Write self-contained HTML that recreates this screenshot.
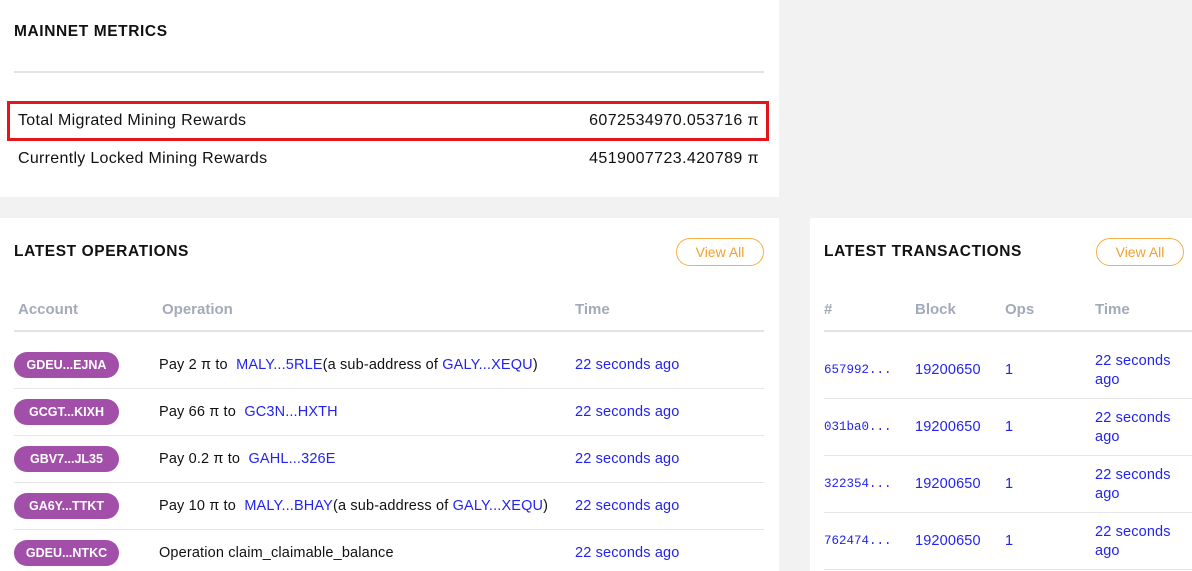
<!DOCTYPE html><html><head><style>
body{margin:0;width:1192px;height:571px;background:#f2f2f2;font-family:"Liberation Sans",sans-serif;position:relative;overflow:hidden;color:#111}
.card{position:absolute;background:#fff}
.a{position:absolute;white-space:nowrap}
h2{position:absolute;margin:0;font-size:15.5px;font-weight:bold;letter-spacing:.6px;color:#111}
.hd{position:absolute;color:#a3aab8;font-size:15px;font-weight:bold}
.ln{position:absolute;height:1px;background:#e6e6e6}
.hl{position:absolute;height:2px;background:#e3e3e3}
.b{position:absolute;left:14px;width:105px;height:26px;border-radius:13px;background:#a14fa8;color:#fff;font-size:12.5px;font-weight:bold;text-align:center;line-height:26px}
.l{color:#2323f0}
.btn{position:absolute;width:86px;height:26px;border:1px solid #f5b04a;border-radius:14px;color:#f0a030;font-size:14px;text-align:center;line-height:26px}
.t{font-size:14.5px;letter-spacing:.15px}
.m{font-family:"Liberation Mono",monospace;font-size:12.5px;color:#2323f0}
.big{font-size:16px}
</style></head><body>
<div class="card" style="left:0;top:0;width:779px;height:197px">
<h2 style="left:14px;top:23px">MAINNET METRICS</h2>
<div class="ln" style="left:14px;top:71px;width:750px;height:2px;background:#e3e3e3"></div>
<div style="position:absolute;left:7px;top:101px;width:756px;height:34px;border:3px solid #e4151b"></div>
<div class="a big" style="left:18px;top:112px;letter-spacing:.3px">Total Migrated Mining Rewards</div>
<div class="a big" style="right:20px;top:112px;letter-spacing:.4px">6072534970.053716 π</div>
<div class="a big" style="left:18px;top:150px;letter-spacing:.3px">Currently Locked Mining Rewards</div>
<div class="a big" style="right:20px;top:150px;letter-spacing:.4px">4519007723.420789 π</div>
</div>
<div class="card" style="left:0;top:218px;width:779px;height:353px">
<h2 style="left:14px;top:25px">LATEST OPERATIONS</h2>
<div class="btn" style="left:676px;top:20px">View All</div>
<div class="hd" style="left:18px;top:83px">Account</div>
<div class="hd" style="left:162px;top:83px">Operation</div>
<div class="hd" style="left:575px;top:83px">Time</div>
<div class="hl" style="left:14px;top:112px;width:750px"></div>
</div>
<div class="b" style="top:352px">GDEU...EJNA</div>
<div class="a t" style="left:159px;top:357px">Pay 2 π to &nbsp;<span class="l">MALY...5RLE</span>(a sub-address of <span class="l">GALY...XEQU</span>)</div>
<div class="a t l" style="left:575px;top:357px">22 seconds ago</div>
<div class="ln" style="left:14px;top:388px;width:750px"></div>
<div class="b" style="top:399px">GCGT...KIXH</div>
<div class="a t" style="left:159px;top:404px">Pay 66 π to &nbsp;<span class="l">GC3N...HXTH</span></div>
<div class="a t l" style="left:575px;top:404px">22 seconds ago</div>
<div class="ln" style="left:14px;top:435px;width:750px"></div>
<div class="b" style="top:446px">GBV7...JL35</div>
<div class="a t" style="left:159px;top:451px">Pay 0.2 π to &nbsp;<span class="l">GAHL...326E</span></div>
<div class="a t l" style="left:575px;top:451px">22 seconds ago</div>
<div class="ln" style="left:14px;top:482px;width:750px"></div>
<div class="b" style="top:493px">GA6Y...TTKT</div>
<div class="a t" style="left:159px;top:498px">Pay 10 π to &nbsp;<span class="l">MALY...BHAY</span>(a sub-address of <span class="l">GALY...XEQU</span>)</div>
<div class="a t l" style="left:575px;top:498px">22 seconds ago</div>
<div class="ln" style="left:14px;top:529px;width:750px"></div>
<div class="b" style="top:540px">GDEU...NTKC</div>
<div class="a t" style="left:159px;top:545px">Operation claim_claimable_balance</div>
<div class="a t l" style="left:575px;top:545px">22 seconds ago</div>

<div class="card" style="left:810px;top:218px;width:382px;height:353px">
<h2 style="left:14px;top:25px">LATEST TRANSACTIONS</h2>
<div class="btn" style="left:286px;top:20px">View All</div>
<div class="hd" style="left:14px;top:83px">#</div>
<div class="hd" style="left:105px;top:83px">Block</div>
<div class="hd" style="left:195px;top:83px">Ops</div>
<div class="hd" style="left:285px;top:83px">Time</div>
<div class="hl" style="left:14px;top:112px;width:368px"></div>
</div>
<div class="a m" style="left:824px;top:363px">657992...</div><div class="a t l" style="left:915px;top:362px">19200650</div><div class="a t l" style="left:1005px;top:362px">1</div><div class="a t l" style="left:1095px;top:352px;line-height:19px">22 seconds<br>ago</div>
<div class="ln" style="left:824px;top:398px;width:368px"></div>
<div class="a m" style="left:824px;top:420px">031ba0...</div><div class="a t l" style="left:915px;top:419px">19200650</div><div class="a t l" style="left:1005px;top:419px">1</div><div class="a t l" style="left:1095px;top:409px;line-height:19px">22 seconds<br>ago</div>
<div class="ln" style="left:824px;top:455px;width:368px"></div>
<div class="a m" style="left:824px;top:477px">322354...</div><div class="a t l" style="left:915px;top:476px">19200650</div><div class="a t l" style="left:1005px;top:476px">1</div><div class="a t l" style="left:1095px;top:466px;line-height:19px">22 seconds<br>ago</div>
<div class="ln" style="left:824px;top:512px;width:368px"></div>
<div class="a m" style="left:824px;top:534px">762474...</div><div class="a t l" style="left:915px;top:533px">19200650</div><div class="a t l" style="left:1005px;top:533px">1</div><div class="a t l" style="left:1095px;top:523px;line-height:19px">22 seconds<br>ago</div>
<div class="ln" style="left:824px;top:569px;width:368px"></div>
</body></html>
